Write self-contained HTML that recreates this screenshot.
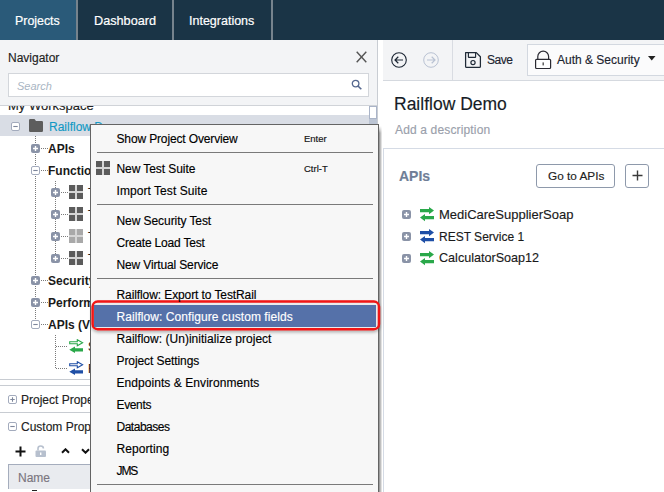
<!DOCTYPE html>
<html><head><meta charset="utf-8"><style>
html,body{margin:0;padding:0;width:664px;height:492px;overflow:hidden;background:#fff}
body>div{position:absolute;box-sizing:border-box}
.t{white-space:nowrap;line-height:1;font-family:"Liberation Sans",sans-serif;-webkit-text-stroke-width:0.15px}
</style></head><body>
<div style="left:0px;top:0px;width:664px;height:40px;background:#1a3446"></div>
<div style="left:0px;top:0px;width:76px;height:40px;background:#2a5a79"></div>
<div style="left:76px;top:0px;width:2px;height:40px;background:#76838d"></div>
<div style="left:172px;top:0px;width:2px;height:40px;background:#76838d"></div>
<div style="left:271px;top:0px;width:2px;height:40px;background:#76838d"></div>
<div class="t" style="left:15px;top:15px;font-size:12.4px;color:#fff;-webkit-text-stroke-width:0.2px">Projects</div>
<div class="t" style="left:94px;top:15px;font-size:12.7px;color:#fff;-webkit-text-stroke-width:0.2px">Dashboard</div>
<div class="t" style="left:189px;top:15px;font-size:12.5px;color:#fff;-webkit-text-stroke-width:0.2px">Integrations</div>
<div style="left:0px;top:40px;width:377px;height:452px;background:#f3f4f6"></div>
<div style="left:377px;top:40px;width:1px;height:452px;background:#c9cdd3"></div>
<div style="left:0px;top:106px;width:369px;height:273px;background:#fff"></div>
<div class="t" style="left:8px;top:99px;font-size:13px;color:#222;">My Workspace</div>
<div style="left:0px;top:40px;width:377px;height:65px;background:#f3f4f6"></div>
<div style="left:0px;top:105px;width:377px;height:1px;background:#d0d3d8"></div>
<div class="t" style="left:8px;top:52px;font-size:12px;color:#222;">Navigator</div>
<svg style="position:absolute;left:356px;top:51px;" width="11" height="12" viewBox="0 0 11 12"><path d="M0.7 0.7L10.3 11.3M10.3 0.7L0.7 11.3" stroke="#555" stroke-width="1.4" fill="none"/></svg>
<div style="left:8px;top:73px;width:361px;height:24px;background:#fff;border:1px solid #d3d6db"></div>
<div class="t" style="left:17px;top:81px;font-size:11px;color:#a9b5c3;font-style:italic;-webkit-text-stroke-width:0">Search</div>
<svg style="position:absolute;left:351px;top:79px;" width="12" height="12" viewBox="0 0 12 12"><circle cx="4.6" cy="4.6" r="3.3" stroke="#56688f" stroke-width="1.3" fill="none"/><path d="M7 7L10.3 10.3" stroke="#56688f" stroke-width="1.6"/></svg>
<div style="left:369px;top:106px;width:8px;height:18px;background:#bcc5d4"></div>
<div style="left:369px;top:106px;width:8px;height:13px;background:#fff;border:1px solid #aab4c8"></div>
<div style="left:0px;top:115px;width:369px;height:21px;background:#d9dde5"></div>
<svg style="position:absolute;left:11px;top:122px;" width="9" height="9" viewBox="0 0 9 9"><rect x="0.5" y="0.5" width="8" height="8" rx="1.5" fill="#fff" stroke="#a3abbd"/><path d="M2.3 4.5H6.7" stroke="#7d869b" stroke-width="1.1"/></svg>
<svg style="position:absolute;left:29px;top:119px;" width="14" height="13" viewBox="0 0 14 13"><path d="M0 1.2Q0 0 1.2 0H5.5L7 2H12.8Q14 2 14 3.2V11.8Q14 13 12.8 13H1.2Q0 13 0 11.8Z" fill="#5d5d5d"/></svg>
<div class="t" style="left:49px;top:121px;font-size:12px;color:#1299c4;">Railflow Demo</div>
<div style="left:35px;top:136px;width:1px;height:189px;background:repeating-linear-gradient(to bottom,#7a7a7a 0 1px,transparent 1px 2px)"></div>
<div style="left:31px;top:143px;width:9px;height:9px;background:#fff"></div>
<svg style="position:absolute;left:31px;top:144px;" width="9" height="9" viewBox="0 0 9 9"><rect x="0" y="0" width="9" height="9" rx="2" fill="#8a93a7"/><path d="M4.5 2V7M2 4.5H7" stroke="#fff" stroke-width="1.4"/></svg>
<div style="left:41px;top:148px;width:7px;height:1px;background:repeating-linear-gradient(to right,#7a7a7a 0 1px,transparent 1px 2px)"></div>
<div class="t" style="left:48px;top:143px;font-size:12px;color:#1a1a1a;font-weight:bold;-webkit-text-stroke-width:0">APIs</div>
<div style="left:31px;top:165px;width:9px;height:9px;background:#fff"></div>
<svg style="position:absolute;left:31px;top:166px;" width="9" height="9" viewBox="0 0 9 9"><rect x="0.5" y="0.5" width="8" height="8" rx="1.5" fill="#fff" stroke="#a3abbd"/><path d="M2.3 4.5H6.7" stroke="#7d869b" stroke-width="1.1"/></svg>
<div style="left:41px;top:170px;width:7px;height:1px;background:repeating-linear-gradient(to right,#7a7a7a 0 1px,transparent 1px 2px)"></div>
<div class="t" style="left:48px;top:165px;font-size:12px;color:#1a1a1a;font-weight:bold;-webkit-text-stroke-width:0">Functional Tests</div>
<div style="left:31px;top:275px;width:9px;height:9px;background:#fff"></div>
<svg style="position:absolute;left:31px;top:276px;" width="9" height="9" viewBox="0 0 9 9"><rect x="0" y="0" width="9" height="9" rx="2" fill="#8a93a7"/><path d="M4.5 2V7M2 4.5H7" stroke="#fff" stroke-width="1.4"/></svg>
<div style="left:41px;top:280px;width:7px;height:1px;background:repeating-linear-gradient(to right,#7a7a7a 0 1px,transparent 1px 2px)"></div>
<div class="t" style="left:48px;top:275px;font-size:12px;color:#1a1a1a;font-weight:bold;-webkit-text-stroke-width:0">Security Tests</div>
<div style="left:31px;top:297px;width:9px;height:9px;background:#fff"></div>
<svg style="position:absolute;left:31px;top:298px;" width="9" height="9" viewBox="0 0 9 9"><rect x="0" y="0" width="9" height="9" rx="2" fill="#8a93a7"/><path d="M4.5 2V7M2 4.5H7" stroke="#fff" stroke-width="1.4"/></svg>
<div style="left:41px;top:302px;width:7px;height:1px;background:repeating-linear-gradient(to right,#7a7a7a 0 1px,transparent 1px 2px)"></div>
<div class="t" style="left:48px;top:297px;font-size:12px;color:#1a1a1a;font-weight:bold;-webkit-text-stroke-width:0">Performance Tests</div>
<div style="left:31px;top:319px;width:9px;height:9px;background:#fff"></div>
<svg style="position:absolute;left:31px;top:320px;" width="9" height="9" viewBox="0 0 9 9"><rect x="0.5" y="0.5" width="8" height="8" rx="1.5" fill="#fff" stroke="#a3abbd"/><path d="M2.3 4.5H6.7" stroke="#7d869b" stroke-width="1.1"/></svg>
<div style="left:41px;top:324px;width:7px;height:1px;background:repeating-linear-gradient(to right,#7a7a7a 0 1px,transparent 1px 2px)"></div>
<div class="t" style="left:48px;top:319px;font-size:12px;color:#1a1a1a;font-weight:bold;-webkit-text-stroke-width:0">APIs (Virtual)</div>
<div style="left:55px;top:181px;width:1px;height:78px;background:repeating-linear-gradient(to bottom,#7a7a7a 0 1px,transparent 1px 2px)"></div>
<svg style="position:absolute;left:51px;top:188px;" width="9" height="9" viewBox="0 0 9 9"><rect x="0" y="0" width="9" height="9" rx="2" fill="#8a93a7"/><path d="M4.5 2V7M2 4.5H7" stroke="#fff" stroke-width="1.4"/></svg>
<div style="left:61px;top:192px;width:7px;height:1px;background:repeating-linear-gradient(to right,#7a7a7a 0 1px,transparent 1px 2px)"></div>
<svg style="position:absolute;left:69px;top:185px;" width="14" height="14" viewBox="0 0 14 14"><rect x="0" y="0" width="14" height="14" fill="#d6d6d6"/><rect x="0" y="0" width="6" height="6" fill="#5c5c5c"/><rect x="8" y="0" width="6" height="6" fill="#5c5c5c"/><rect x="0" y="8" width="6" height="6" fill="#5c5c5c"/><rect x="8" y="8" width="6" height="6" fill="#5c5c5c"/></svg>
<div class="t" style="left:88px;top:187px;font-size:12px;color:#1a1a1a;">TestSuite</div>
<svg style="position:absolute;left:51px;top:210px;" width="9" height="9" viewBox="0 0 9 9"><rect x="0" y="0" width="9" height="9" rx="2" fill="#8a93a7"/><path d="M4.5 2V7M2 4.5H7" stroke="#fff" stroke-width="1.4"/></svg>
<div style="left:61px;top:214px;width:7px;height:1px;background:repeating-linear-gradient(to right,#7a7a7a 0 1px,transparent 1px 2px)"></div>
<svg style="position:absolute;left:69px;top:207px;" width="14" height="14" viewBox="0 0 14 14"><rect x="0" y="0" width="14" height="14" fill="#d6d6d6"/><rect x="0" y="0" width="6" height="6" fill="#5c5c5c"/><rect x="8" y="0" width="6" height="6" fill="#5c5c5c"/><rect x="0" y="8" width="6" height="6" fill="#5c5c5c"/><rect x="8" y="8" width="6" height="6" fill="#5c5c5c"/></svg>
<div class="t" style="left:88px;top:209px;font-size:12px;color:#1a1a1a;">TestSuite</div>
<svg style="position:absolute;left:51px;top:232px;" width="9" height="9" viewBox="0 0 9 9"><rect x="0" y="0" width="9" height="9" rx="2" fill="#8a93a7"/><path d="M4.5 2V7M2 4.5H7" stroke="#fff" stroke-width="1.4"/></svg>
<div style="left:61px;top:236px;width:7px;height:1px;background:repeating-linear-gradient(to right,#7a7a7a 0 1px,transparent 1px 2px)"></div>
<svg style="position:absolute;left:69px;top:229px;" width="14" height="14" viewBox="0 0 14 14"><rect x="0" y="0" width="14" height="14" fill="#d6d6d6"/><rect x="0" y="0" width="6" height="6" fill="#a9a9a9"/><rect x="8" y="0" width="6" height="6" fill="#a9a9a9"/><rect x="0" y="8" width="6" height="6" fill="#a9a9a9"/><rect x="8" y="8" width="6" height="6" fill="#a9a9a9"/></svg>
<div class="t" style="left:88px;top:231px;font-size:12px;color:#1a1a1a;">TestSuite</div>
<svg style="position:absolute;left:51px;top:254px;" width="9" height="9" viewBox="0 0 9 9"><rect x="0" y="0" width="9" height="9" rx="2" fill="#8a93a7"/><path d="M4.5 2V7M2 4.5H7" stroke="#fff" stroke-width="1.4"/></svg>
<div style="left:61px;top:258px;width:7px;height:1px;background:repeating-linear-gradient(to right,#7a7a7a 0 1px,transparent 1px 2px)"></div>
<svg style="position:absolute;left:69px;top:251px;" width="14" height="14" viewBox="0 0 14 14"><rect x="0" y="0" width="14" height="14" fill="#d6d6d6"/><rect x="0" y="0" width="6" height="6" fill="#5c5c5c"/><rect x="8" y="0" width="6" height="6" fill="#5c5c5c"/><rect x="0" y="8" width="6" height="6" fill="#5c5c5c"/><rect x="8" y="8" width="6" height="6" fill="#5c5c5c"/></svg>
<div class="t" style="left:88px;top:253px;font-size:12px;color:#1a1a1a;">TestSuite</div>
<div style="left:55px;top:335px;width:1px;height:34px;background:repeating-linear-gradient(to bottom,#7a7a7a 0 1px,transparent 1px 2px)"></div>
<div style="left:56px;top:346px;width:12px;height:1px;background:repeating-linear-gradient(to right,#7a7a7a 0 1px,transparent 1px 2px)"></div>
<div style="left:56px;top:368px;width:12px;height:1px;background:repeating-linear-gradient(to right,#7a7a7a 0 1px,transparent 1px 2px)"></div>
<svg style="position:absolute;left:69px;top:339px;" width="15" height="15" viewBox="0 0 15 15"><path d="M0.7 2.7H8.3V0.7L13.6 3.7L8.3 6.7V4.7H0.7Z" fill="#fff" stroke="#2aa84a" stroke-width="1.1"/><path d="M14 9.2H6V7.5L0.3 10.8L6 14V12.4H14Z" fill="#2aa84a"/></svg>
<svg style="position:absolute;left:69px;top:361px;" width="15" height="15" viewBox="0 0 15 15"><path d="M0.7 2.7H8.3V0.7L13.6 3.7L8.3 6.7V4.7H0.7Z" fill="#fff" stroke="#1f4fa6" stroke-width="1.1"/><path d="M14 9.2H6V7.5L0.3 10.8L6 14V12.4H14Z" fill="#1f4fa6"/></svg>
<div class="t" style="left:88px;top:341px;font-size:12px;color:#1a1a1a;">SoapService</div>
<div class="t" style="left:88px;top:363px;font-size:12px;color:#1a1a1a;">RestService</div>
<div style="left:0px;top:379px;width:377px;height:1px;background:#c8ccd2"></div>
<div style="left:0px;top:380px;width:377px;height:112px;background:#fff"></div>
<div style="left:0px;top:385px;width:377px;height:1px;background:#c8ccd2"></div>
<svg style="position:absolute;left:8px;top:395px;" width="9" height="9" viewBox="0 0 9 9"><rect x="0.5" y="0.5" width="8" height="8" rx="1.5" fill="#fff" stroke="#a3abbd"/><path d="M4.5 2.3V6.7M2.3 4.5H6.7" stroke="#7d869b" stroke-width="1.1"/></svg>
<div class="t" style="left:21px;top:394px;font-size:12px;color:#222;">Project Properties</div>
<div style="left:0px;top:412px;width:377px;height:1px;background:#c8ccd2"></div>
<svg style="position:absolute;left:8px;top:422px;" width="9" height="9" viewBox="0 0 9 9"><rect x="0.5" y="0.5" width="8" height="8" rx="1.5" fill="#fff" stroke="#a3abbd"/><path d="M2.3 4.5H6.7" stroke="#7d869b" stroke-width="1.1"/></svg>
<div class="t" style="left:21px;top:421px;font-size:12px;color:#222;">Custom Properties</div>
<svg style="position:absolute;left:15px;top:446px;" width="11" height="11" viewBox="0 0 11 11"><path d="M5.5 0.5V10.5M0.5 5.5H10.5" stroke="#111" stroke-width="2"/></svg>
<svg style="position:absolute;left:35px;top:445px;" width="12" height="12" viewBox="0 0 12 12"><path d="M3 5.5V3.5Q3 1 5.7 1Q8.4 1 8.4 3.5" stroke="#b7c0ce" stroke-width="1.6" fill="none"/><rect x="0.5" y="5.5" width="10.5" height="6.5" rx="1" fill="#b7c0ce"/><rect x="5" y="7.5" width="1.4" height="2.5" fill="#fff"/></svg>
<svg style="position:absolute;left:61px;top:448px;" width="9" height="6" viewBox="0 0 9 6"><path d="M1 4.8L4.5 1.3L8 4.8" stroke="#111" stroke-width="2" fill="none"/></svg>
<svg style="position:absolute;left:81px;top:448px;" width="9" height="6" viewBox="0 0 9 6"><path d="M1 1.2L4.5 4.7L8 1.2" stroke="#111" stroke-width="2" fill="none"/></svg>
<div style="left:8px;top:464px;width:369px;height:25px;background:#e9ebef;border-top:1px solid #a5adbd;border-left:1px solid #a5adbd"></div>
<div class="t" style="left:18px;top:472px;font-size:12px;color:#7b7680;">Name</div>
<div style="left:8px;top:489px;width:369px;height:3px;background:#fff"></div>
<div style="left:32px;top:490px;width:5px;height:1px;background:#222"></div>
<div style="left:378px;top:40px;width:286px;height:452px;background:#fff"></div>
<div style="left:383px;top:40px;width:281px;height:40px;background:#f3f4f6"></div>
<div style="left:383px;top:80px;width:281px;height:1px;background:#d5d9df"></div>
<div style="left:452px;top:40px;width:1px;height:40px;background:#d9dce2"></div>
<svg style="position:absolute;left:390px;top:51px;" width="18" height="18" viewBox="0 0 18 18"><circle cx="9" cy="9" r="7.3" stroke="#1c2634" stroke-width="1.1" fill="none"/><path d="M8.3 5.8L5 9L8.3 12.2M5.2 9H13" stroke="#1c2634" stroke-width="1.2" fill="none"/></svg>
<svg style="position:absolute;left:422px;top:51px;" width="18" height="18" viewBox="0 0 18 18"><circle cx="9" cy="9" r="7.3" stroke="#b9c2d3" stroke-width="1.0" fill="none"/><path d="M9.7 5.8L13 9L9.7 12.2M12.8 9H5" stroke="#b9c2d3" stroke-width="1.2" fill="none"/></svg>
<svg style="position:absolute;left:464px;top:51px;" width="18" height="18" viewBox="0 0 18 18"><path d="M1.6 1.6H12.3L16.4 5.7V15.4Q16.4 16.4 15.4 16.4H2.6Q1.6 16.4 1.6 15.4Z" stroke="#1f2a37" stroke-width="1.25" fill="none" stroke-linejoin="round"/><path d="M4.4 1.6V5.9Q4.4 6.4 4.9 6.4H11.1Q11.6 6.4 11.6 5.9V1.6" stroke="#1f2a37" stroke-width="1.15" fill="none"/><circle cx="9" cy="11.6" r="2.1" stroke="#1f2a37" stroke-width="1.2" fill="none"/></svg>
<div class="t" style="left:487px;top:54px;font-size:12px;color:#1c2430;letter-spacing:-0.5px">Save</div>
<div style="left:527px;top:44px;width:140px;height:32px;background:#fbfbfc;border:1px solid #d3d8e0"></div>
<svg style="position:absolute;left:534px;top:50px;" width="18" height="20" viewBox="0 0 18 20"><path d="M3.8 9.2V6.6A5.4 5.4 0 0 1 14.6 6.6V9.2" stroke="#2a2a32" stroke-width="1.2" fill="none"/><rect x="1.6" y="9.3" width="15" height="9.2" rx="1" stroke="#2a2a32" stroke-width="1.2" fill="#fff"/><rect x="8.5" y="12.4" width="1.4" height="3" fill="#555"/></svg>
<div class="t" style="left:557px;top:54px;font-size:12px;color:#1c2430;">Auth &amp; Security</div>
<svg style="position:absolute;left:648px;top:56px;" width="8" height="5" viewBox="0 0 8 5"><path d="M0 0H7.5L3.75 4.5Z" fill="#222"/></svg>
<div class="t" style="left:394px;top:96px;font-size:17.5px;color:#161c26;">Railflow Demo</div>
<div class="t" style="left:395px;top:124px;font-size:12px;color:#9aa0ab;letter-spacing:0.15px">Add a description</div>
<div style="left:383px;top:148px;width:281px;height:344px;background:#fff;border-left:1px solid #d5dbe5;border-top:1px solid #d5dbe5"></div>
<div class="t" style="left:399px;top:169px;font-size:14px;color:#6f7e97;font-weight:bold">APIs</div>
<div style="left:536px;top:164px;width:79px;height:24px;background:#fff;border:1px solid #8e99ab;border-radius:3px"></div>
<div class="t" style="left:548px;top:171px;font-size:11.8px;color:#222;">Go to APIs</div>
<div style="left:625px;top:164px;width:24px;height:24px;background:#fff;border:1px solid #8e99ab;border-radius:3px"></div>
<svg style="position:absolute;left:632px;top:170px;" width="12" height="12" viewBox="0 0 12 12"><path d="M5.5 0.5V10.5M0.5 5.5H10.5" stroke="#3a3a3a" stroke-width="1.4"/></svg>
<svg style="position:absolute;left:402px;top:210px;" width="9" height="9" viewBox="0 0 9 9"><rect x="0" y="0" width="9" height="9" rx="2" fill="#8a93a7"/><path d="M4.5 2V7M2 4.5H7" stroke="#fff" stroke-width="1.4"/></svg>
<svg style="position:absolute;left:420px;top:207px;" width="14" height="15" viewBox="0 0 14 15"><path d="M0 2H9V0L14 3.6L9 7.2V5.2H0Z" fill="#2aa84a"/><path d="M14 9H5V7L0 10.6L5 14.2V12.2H14Z" fill="#2aa84a"/></svg>
<div class="t" style="left:439px;top:208px;font-size:13px;color:#1a1a1a;">MediCareSupplierSoap</div>
<svg style="position:absolute;left:402px;top:232px;" width="9" height="9" viewBox="0 0 9 9"><rect x="0" y="0" width="9" height="9" rx="2" fill="#8a93a7"/><path d="M4.5 2V7M2 4.5H7" stroke="#fff" stroke-width="1.4"/></svg>
<svg style="position:absolute;left:420px;top:229px;" width="14" height="15" viewBox="0 0 14 15"><path d="M0 2H9V0L14 3.6L9 7.2V5.2H0Z" fill="#1f4fa6"/><path d="M14 9H5V7L0 10.6L5 14.2V12.2H14Z" fill="#1f4fa6"/></svg>
<div class="t" style="left:439px;top:231px;font-size:12px;color:#1a1a1a;">REST Service 1</div>
<svg style="position:absolute;left:402px;top:254px;" width="9" height="9" viewBox="0 0 9 9"><rect x="0" y="0" width="9" height="9" rx="2" fill="#8a93a7"/><path d="M4.5 2V7M2 4.5H7" stroke="#fff" stroke-width="1.4"/></svg>
<svg style="position:absolute;left:420px;top:251px;" width="14" height="15" viewBox="0 0 14 15"><path d="M0 2H9V0L14 3.6L9 7.2V5.2H0Z" fill="#2aa84a"/><path d="M14 9H5V7L0 10.6L5 14.2V12.2H14Z" fill="#2aa84a"/></svg>
<div class="t" style="left:439px;top:252px;font-size:12.6px;color:#1a1a1a;">CalculatorSoap12</div>
<div style="left:379px;top:126px;width:3px;height:366px;background:linear-gradient(to right,rgba(0,0,0,.45),rgba(0,0,0,.05));-webkit-mask-image:linear-gradient(to bottom,transparent,#000 7px)"></div>
<div style="left:90px;top:124px;width:289px;height:368px;background:#f7f7f7;border:1px solid #646464;border-bottom:none"></div>
<div style="left:97px;top:152px;width:276px;height:1px;background:#7a7a7a"></div>
<div style="left:97px;top:204px;width:276px;height:1px;background:#7a7a7a"></div>
<div style="left:97px;top:278px;width:276px;height:1px;background:#7a7a7a"></div>
<div style="left:97px;top:484px;width:276px;height:1px;background:#7a7a7a"></div>
<svg style="position:absolute;left:96px;top:161px;" width="14" height="14" viewBox="0 0 14 14"><rect x="0" y="0" width="14" height="14" fill="#d6d6d6"/><rect x="0" y="0" width="6" height="6" fill="#5c5c5c"/><rect x="8" y="0" width="6" height="6" fill="#5c5c5c"/><rect x="0" y="8" width="6" height="6" fill="#5c5c5c"/><rect x="8" y="8" width="6" height="6" fill="#5c5c5c"/></svg>
<div class="t" style="left:304px;top:134px;font-size:9.5px;color:#111;">Enter</div>
<div class="t" style="left:304px;top:164px;font-size:9.5px;color:#111;">Ctrl-T</div>
<svg style="position:absolute;left:88px;top:294px;" width="296" height="46" viewBox="0 0 296 46"><defs><filter id="ds" x="-5%" y="-30%" width="110%" height="160%"><feGaussianBlur in="SourceAlpha" stdDeviation="1.6"/><feOffset dy="2.2"/><feComponentTransfer><feFuncA type="linear" slope="0.28"/></feComponentTransfer><feMerge><feMergeNode/><feMergeNode in="SourceGraphic"/></feMerge></filter></defs><rect x="4.65" y="7.55" width="286.3" height="27.6" rx="5" fill="#e9ebec" stroke="#f01414" stroke-width="2.5" filter="url(#ds)"/></svg>
<div style="left:94px;top:305px;width:282px;height:22px;background:#5571a9"></div>
<div class="t" style="left:116.5px;top:133px;font-size:12px;color:#000;letter-spacing:-0.14px">Show Project Overview</div>
<div class="t" style="left:116.5px;top:163px;font-size:12px;color:#000;letter-spacing:-0.077px">New Test Suite</div>
<div class="t" style="left:116.5px;top:185px;font-size:12px;color:#000;letter-spacing:0.062px">Import Test Suite</div>
<div class="t" style="left:116.5px;top:215px;font-size:12px;color:#000;letter-spacing:-0.069px">New Security Test</div>
<div class="t" style="left:116.5px;top:237px;font-size:12px;color:#000;letter-spacing:-0.187px">Create Load Test</div>
<div class="t" style="left:116.5px;top:259px;font-size:12px;color:#000;letter-spacing:-0.144px">New Virtual Service</div>
<div class="t" style="left:116.5px;top:289px;font-size:12px;color:#000;letter-spacing:-0.096px">Railflow: Export to TestRail</div>
<div class="t" style="left:116.5px;top:311px;font-size:12px;color:#fff;letter-spacing:0.066px">Railflow: Configure custom fields</div>
<div class="t" style="left:116.5px;top:333px;font-size:12px;color:#000;letter-spacing:0.029px">Railflow: (Un)initialize project</div>
<div class="t" style="left:116.5px;top:355px;font-size:12px;color:#000;letter-spacing:-0.087px">Project Settings</div>
<div class="t" style="left:116.5px;top:377px;font-size:12px;color:#000;letter-spacing:0.061px">Endpoints &amp; Environments</div>
<div class="t" style="left:116.5px;top:399px;font-size:12px;color:#000;letter-spacing:-0.36px">Events</div>
<div class="t" style="left:116.5px;top:421px;font-size:12px;color:#000;letter-spacing:-0.487px">Databases</div>
<div class="t" style="left:116.5px;top:443px;font-size:12px;color:#000;letter-spacing:0.088px">Reporting</div>
<div class="t" style="left:116.5px;top:465px;font-size:12px;color:#000;letter-spacing:-1.1px">JMS</div>
</body></html>
